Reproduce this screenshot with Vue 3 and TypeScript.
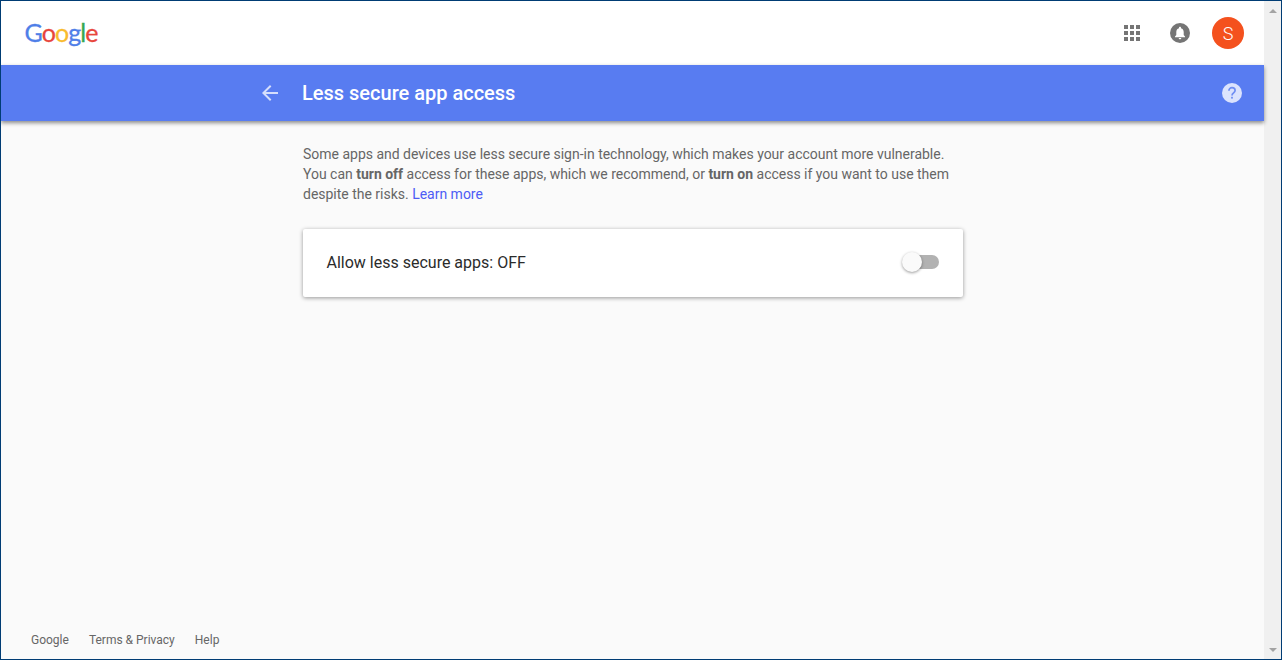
<script setup lang="ts">
const footerLinks: string[] = ['Google', 'Terms & Privacy', 'Help']
const logo: { ch: string; color: string }[] = [
  { ch: 'G', color: '#4f7fe8' },
  { ch: 'o', color: '#e8453c' },
  { ch: 'o', color: '#f9bb2d' },
  { ch: 'g', color: '#4f7fe8' },
  { ch: 'l', color: '#34a853' },
  { ch: 'e', color: '#e8453c' },
]
</script>

<template>
  <div class="window">
    <div class="page">
      <header class="top">
        <div class="logo"><span v-for="(l, i) in logo" :key="i" :style="{ color: l.color }">{{ l.ch }}</span></div>
        <div class="top-actions">
          <svg class="grid" width="16" height="16" viewBox="0 0 16 16" fill="#757575">
            <rect x="0" y="0" width="4" height="4" /><rect x="6" y="0" width="4" height="4" /><rect x="12" y="0" width="4" height="4" />
            <rect x="0" y="6" width="4" height="4" /><rect x="6" y="6" width="4" height="4" /><rect x="12" y="6" width="4" height="4" />
            <rect x="0" y="12" width="4" height="4" /><rect x="6" y="12" width="4" height="4" /><rect x="12" y="12" width="4" height="4" />
          </svg>
          <svg class="bell" width="20" height="20" viewBox="0 0 20 20">
            <circle cx="10" cy="10" r="10" fill="#757575" />
            <path fill="#fff" d="M10 3.800c-.6 0-1 .4-1 1v.5C7.300 5.800 6.300 7.200 6.300 9v3L5 13.600v.6h10v-.6L13.700 12V9c0-1.800-1-3.200-2.700-3.700v-.5c0-.6-.4-1-1-1zM8.700 15c0 .7.6 1.300 1.300 1.300s1.300-.6 1.300-1.300H8.700z" />
          </svg>
          <div class="avatar">S</div>
        </div>
      </header>

      <div class="bar">
        <svg class="back" width="24" height="24" viewBox="0 0 24 24">
          <path fill="#fff" fill-opacity=".75" d="M20 11H7.830l5.590-5.590L12 4l-8 8 8 8 1.410-1.410L7.830 13H20v-2z" />
        </svg>
        <h1 class="title">Less secure app access</h1>
        <svg class="help" width="20" height="20" viewBox="0 0 20 20">
          <circle cx="10" cy="10" r="10" fill="#dbe3fd" />
          <path fill="none" stroke="#6f8ef3" stroke-width="1.700" d="M6.900 7.700c0-1.800 1.400-3 3.100-3s3.100 1.200 3.100 2.900c0 2.300-3.100 2.400-3.100 4.900" />
          <rect x="9.100" y="13.800" width="1.800" height="1.800" fill="#6f8ef3" />
        </svg>
      </div>

      <main class="content">
        <p class="intro">
          Some apps and devices use less secure sign-in technology, which makes your account more vulnerable.<br />
          You can <b>turn off</b> access for these apps, which we recommend, or <b>turn on</b> access if you want to use them<br />
          despite the risks. <a class="link">Learn more</a>
        </p>
        <section class="card">
          <span class="card-label">Allow less secure apps: OFF</span>
          <span class="toggle"><span class="thumb"></span></span>
        </section>
      </main>

      <footer class="foot">
        <span v-for="f in footerLinks" :key="f">{{ f }}</span>
      </footer>
    </div>

    <div class="scrollbar">
      <span class="arrow up"></span>
      <span class="arrow down"></span>
    </div>
  </div>
</template>

<style scoped>
.window {
  box-sizing: border-box;
  width: 1282px;
  height: 660px;
  border: 1px solid #003c74;
  display: flex;
  overflow: hidden;
  font-family: Roboto, "Liberation Sans", sans-serif;
  background: #fafafa;
}
.page {
  flex: 1;
  min-width: 0;
  display: flex;
  flex-direction: column;
}
.top {
  height: 64px;
  flex: none;
  background: #fff;
  display: flex;
  align-items: center;
  justify-content: space-between;
  padding: 0 20px 0 23.500px;
}
.logo {
  font-family: Lato, "Open Sans", sans-serif;
  font-size: 25px;
  letter-spacing: -0.9px;
  line-height: 1;
  margin-bottom: 2px;
  -webkit-text-stroke: 0.3px currentColor;
}
.top-actions {
  display: flex;
  align-items: center;
}
.bell {
  margin-left: 30px;
}
.avatar {
  width: 32px;
  height: 32px;
  margin-left: 22px;
  border-radius: 50%;
  background: #f4511e;
  color: #fff;
  font-size: 18px;
  font-weight: 300;
  display: flex;
  align-items: center;
  justify-content: center;
}
.bar {
  height: 56px;
  flex: none;
  background: #587cf1;
  box-shadow: 0 2px 4px rgba(0, 0, 0, 0.45);
  display: flex;
  align-items: center;
  padding: 0 22px 0 257px;
  position: relative;
}
.title {
  margin: 0 0 0 20px;
  flex: 1;
  color: #fff;
  font-size: 20px;
  font-weight: 500;
}
.content {
  flex: 1;
  padding: 23px 0 0 302px;
}
.intro {
  margin: 0;
  width: 680px;
  font-size: 14px;
  line-height: 20px;
  letter-spacing: -0.01px;
  color: #666;
}
.intro b {
  font-weight: 700;
}
.link {
  color: #4d5cf5;
}
.card {
  box-sizing: border-box;
  width: 660px;
  height: 68px;
  margin-top: 25px;
  padding: 0 24px 2px 23.500px;
  background: #fff;
  border-radius: 2px;
  box-shadow: 0 1px 4px rgba(0, 0, 0, 0.4);
  display: flex;
  align-items: center;
  justify-content: space-between;
}
.card-label {
  font-size: 16px;
  color: #2b2b2b;
}
.toggle {
  position: relative;
  width: 34px;
  height: 14px;
  border-radius: 7px;
  background: #b2b2b2;
}
.thumb {
  position: absolute;
  left: -3px;
  top: -3px;
  width: 20px;
  height: 20px;
  border-radius: 50%;
  background: #fafafa;
  box-shadow: 0 1px 3px rgba(0, 0, 0, 0.4);
}
.foot {
  flex: none;
  height: 38px;
  padding-left: 30px;
  display: flex;
  gap: 20px;
  font-size: 12px;
  line-height: 38px;
  color: #666;
}
.scrollbar {
  width: 17px;
  flex: none;
  background: #f0f0f0;
  display: flex;
  flex-direction: column;
  justify-content: space-between;
  align-items: center;
  padding: 8px 0 7px;
  box-sizing: border-box;
}
.arrow {
  width: 0;
  height: 0;
  border-left: 4px solid transparent;
  border-right: 4px solid transparent;
}
.up {
  border-bottom: 4px solid #a3a3a3;
}
.down {
  border-top: 4px solid #a3a3a3;
}
</style>
